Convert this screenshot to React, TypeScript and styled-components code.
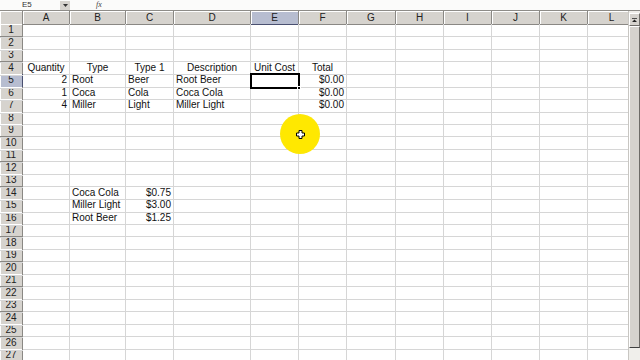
import styled, { createGlobalStyle } from "styled-components";

const GlobalStyle = createGlobalStyle`
  html, body {
    margin: 0;
    padding: 0;
    background: #ffffff;
  }
  body {
    font-family: "Liberation Sans", Arial, sans-serif;
  }
`;

const COLS = ["A", "B", "C", "D", "E", "F", "G", "H", "I", "J", "K", "L"];
const TEMPLATE = "23px 47px 56px 48px 77px 48px 48px 49px 48px 48px 48px 48px 48px";

type Align = "left" | "center" | "right";
type CellData = { text: string; align?: Align };

const data: Record<number, Record<string, CellData>> = {
  4: {
    A: { text: "Quantity", align: "center" },
    B: { text: "Type", align: "center" },
    C: { text: "Type 1", align: "center" },
    D: { text: "Description", align: "center" },
    E: { text: "Unit Cost", align: "center" },
    F: { text: "Total", align: "center" },
  },
  5: {
    A: { text: "2", align: "right" },
    B: { text: "Root" },
    C: { text: "Beer" },
    D: { text: "Root Beer" },
    F: { text: "$0.00", align: "right" },
  },
  6: {
    A: { text: "1", align: "right" },
    B: { text: "Coca" },
    C: { text: "Cola" },
    D: { text: "Coca Cola" },
    F: { text: "$0.00", align: "right" },
  },
  7: {
    A: { text: "4", align: "right" },
    B: { text: "Miller" },
    C: { text: "Light" },
    D: { text: "Miller Light" },
    F: { text: "$0.00", align: "right" },
  },
  14: { B: { text: "Coca Cola" }, C: { text: "$0.75", align: "right" } },
  15: { B: { text: "Miller Light" }, C: { text: "$3.00", align: "right" } },
  16: { B: { text: "Root Beer" }, C: { text: "$1.25", align: "right" } },
};

const App = () => {
  const rows = Array.from({ length: 27 }, (_, i) => i + 1);

  return (
    <>
      <GlobalStyle />
      <Window>
        <FormulaBar>
          <NameBox>E5</NameBox>
          <DropButton>
            <svg width="5" height="3" viewBox="0 0 5 3">
              <path d="M0 0h5L2.5 3z" fill="#333" />
            </svg>
          </DropButton>
          <Fx>fx</Fx>
        </FormulaBar>
        <Sheet>
          <Grid>
            <HeaderRow>
              <Corner />
              {COLS.map((c) => (
                <ColHeader key={c} $active={c === "E"}>
                  {c}
                </ColHeader>
              ))}
              <ColHeader $active={false} />
            </HeaderRow>
            {rows.map((r) => (
              <Row key={r}>
                <RowHeader $active={r === 5}>{r}</RowHeader>
                {COLS.map((c) => {
                  const cell = data[r]?.[c];
                  return (
                    <Cell key={c} $align={cell?.align ?? "left"} $selected={r === 5 && c === "E"}>
                      {cell?.text}
                      {r === 5 && c === "E" && <FillHandle />}
                    </Cell>
                  );
                })}
                <Cell $align="left" $selected={false} />
              </Row>
            ))}
            <Spotlight>
              <svg width="9" height="9" viewBox="0 0 9 9">
                <path
                  d="M3 0.5h3v2.5h2.5v3H6v2.5H3V6H0.5V3H3z"
                  fill="#fff"
                  stroke="#000"
                  strokeWidth="1"
                />
              </svg>
            </Spotlight>
          </Grid>
          <ScrollBar>
            <ScrollButton>
              <svg width="5" height="4" viewBox="0 0 5 4">
                <path d="M0 0h5v0.8H0zM0 4h5L2.5 1.5z" fill="#222" />
              </svg>
            </ScrollButton>
            <Thumb />
            <Track />
          </ScrollBar>
        </Sheet>
      </Window>
    </>
  );
};

const Window = styled.div`
  width: 640px;
  height: 360px;
  overflow: hidden;
  display: flex;
  flex-direction: column;
  background: #ffffff;
`;

const FormulaBar = styled.div`
  height: 10px;
  flex: none;
  display: flex;
  align-items: center;
  background: #fbfbfa;
  border-bottom: 1px solid #8e8c88;
  font-size: 8px;
  color: #333;
  line-height: 10px;
`;

const NameBox = styled.div`
  width: 38px;
  padding-left: 22px;
  height: 10px;
`;

const DropButton = styled.div`
  width: 10px;
  height: 9px;
  background: #d6d3ce;
  display: flex;
  align-items: center;
  justify-content: center;
`;

const Fx = styled.div`
  margin-left: 26px;
  font-style: italic;
  font-family: "Liberation Serif", serif;
  font-size: 8px;
  color: #444;
`;

const Sheet = styled.div`
  flex: 1;
  display: flex;
  min-height: 0;
`;

const Grid = styled.div`
  position: relative;
  flex: 1;
  overflow: hidden;
`;

const HeaderRow = styled.div`
  display: grid;
  grid-template-columns: ${TEMPLATE};
  height: 13px;
  background: #d6d3ce;
`;

const Row = styled.div`
  display: grid;
  grid-template-columns: ${TEMPLATE};
  height: 12.5px;
`;

const Corner = styled.div`
  background: #d6d3ce;
  border-right: 1px solid #8a8884;
  border-bottom: 1px solid #8a8884;
  box-shadow: inset 1px 1px 0 #fff;
`;

const ColHeader = styled.div<{ $active: boolean }>`
  background: ${({ $active }) => ($active ? "#b7bdd0" : "#d6d3ce")};
  border-right: 1px solid #8a8884;
  border-bottom: 1px solid ${({ $active }) => ($active ? "#4a5070" : "#8a8884")};
  box-shadow: inset 1px 1px 0 #fff;
  font-size: 10px;
  line-height: 13px;
  text-align: center;
  color: #222;
`;

const RowHeader = styled.div<{ $active: boolean }>`
  background: ${({ $active }) => ($active ? "#b7bdd0" : "#d6d3ce")};
  border-right: 1px solid ${({ $active }) => ($active ? "#4a5070" : "#8a8884")};
  border-bottom: 1px solid #8a8884;
  box-shadow: inset 1px 1px 0 #fff;
  font-size: 10px;
  line-height: 12px;
  text-align: center;
  color: #222;
`;

const Cell = styled.div<{ $align: Align; $selected: boolean }>`
  position: relative;
  box-sizing: border-box;
  border-right: 1px solid #d6d6d6;
  border-bottom: 1px solid #d6d6d6;
  font-size: 10px;
  line-height: 12.5px;
  padding: 0 2px;
  white-space: nowrap;
  overflow: visible;
  color: #111;
  text-align: ${({ $align }) => $align};
  ${({ $selected }) =>
    $selected &&
    `
    outline: 2px solid #000;
    outline-offset: -1px;
    z-index: 2;
  `}
`;

const FillHandle = styled.span`
  position: absolute;
  right: -3px;
  bottom: -3px;
  width: 4px;
  height: 4px;
  background: #000;
  border: 1px solid #fff;
  box-sizing: border-box;
`;

const Spotlight = styled.div`
  position: absolute;
  left: 280px;
  top: 103px;
  width: 40px;
  height: 40px;
  border-radius: 50%;
  background: radial-gradient(circle, #ffe800 60%, #f6e31c 100%);
  display: flex;
  align-items: center;
  justify-content: center;
  z-index: 3;
`;

const ScrollBar = styled.div`
  width: 11px;
  flex: none;
  display: flex;
  flex-direction: column;
  background: #efede9;
  border-left: 1px solid #c8c6c2;
`;

const ScrollButton = styled.div`
  height: 11px;
  margin-top: 2px;
  background: #d6d3ce;
  border: 1px solid;
  border-color: #fff #6e6c68 #6e6c68 #fff;
  display: flex;
  align-items: center;
  justify-content: center;
`;

const Thumb = styled.div`
  height: 322px;
  background: #d6d3ce;
  border: 1px solid;
  border-color: #fff #6e6c68 #404040 #fff;
  box-sizing: border-box;
`;

const Track = styled.div`
  flex: 1;
  background: #f0efeb;
`;

export default App;
